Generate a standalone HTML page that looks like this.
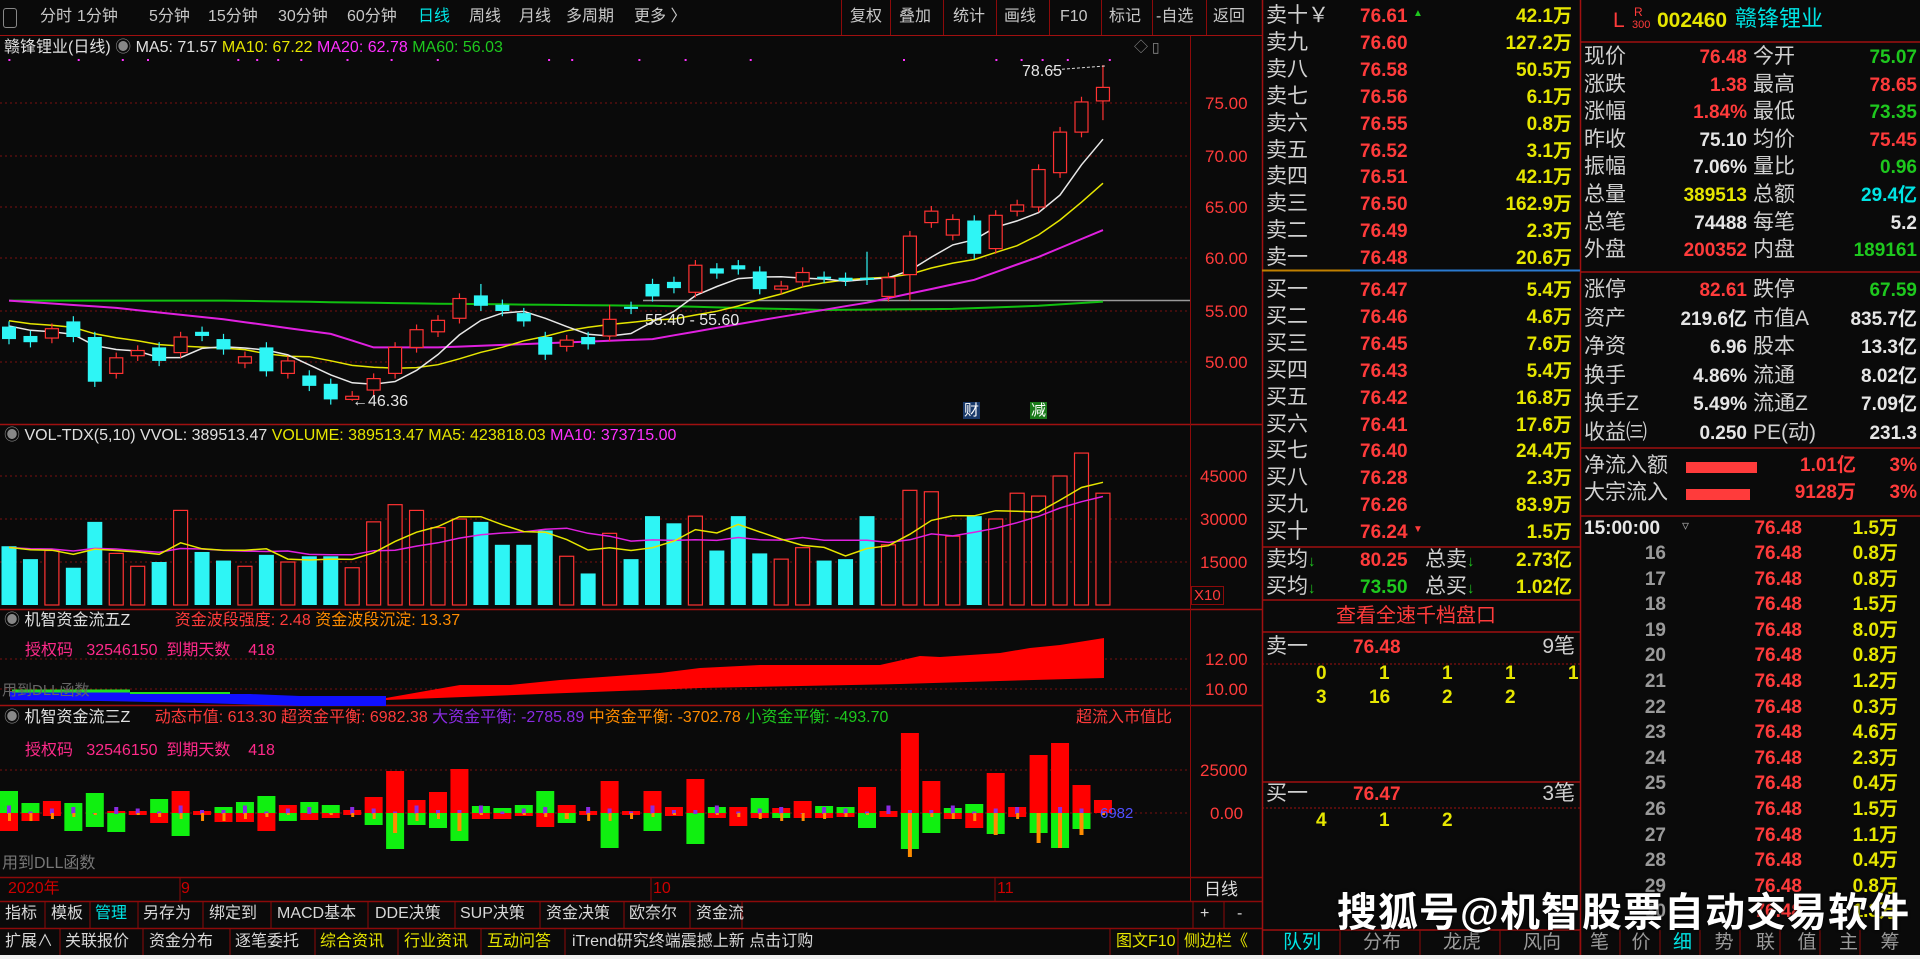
<!DOCTYPE html>
<html><head><meta charset="utf-8">
<style>
*{margin:0;padding:0;box-sizing:border-box}
body{width:1920px;height:959px;background:#0a0a0a;overflow:hidden;position:relative;font-family:"Liberation Sans","Noto Sans CJK SC",sans-serif;color:#c8c8c8}
.a{position:absolute;white-space:nowrap;line-height:1}
.hl{position:absolute;height:1px;background:#8c0a0a}
.vl{position:absolute;width:1px;background:#8c0a0a}
.tb{font-size:16px;top:9px;color:#c8c8c8}
.ob{font-size:21px;color:#d0d0d0}
.n{font-size:19px;font-weight:bold}
.bt{font-size:16px;color:#d8d8d8}
.a.r{color:#ff3b3b}.a.y{color:#e6e600}.a.g{color:#1ec81e}.a.c{color:#00e5e5}.a.w{color:#e6e6e6}.a.m{color:#ff30ff}.a.gr{color:#9a9a9a}
span.r{color:#ff3b3b}span.y{color:#e6e600}span.g{color:#1ec81e}span.m{color:#ff30ff}
</style></head><body>
<svg id="sv" width="1920" height="959" style="position:absolute;left:0;top:0"></svg>

<div class="hl" style="left:0;top:35px;width:1262px;background:#a01010"></div>
<div class="a" style="left:3px;top:8px;width:14px;height:20px;border:1px solid #888;border-radius:3px"></div>
<div class="a tb" style="left:40px">分时</div>
<div class="a tb" style="left:77px">1分钟</div>
<div class="a tb" style="left:149px">5分钟</div>
<div class="a tb" style="left:208px">15分钟</div>
<div class="a tb" style="left:278px">30分钟</div>
<div class="a tb" style="left:347px">60分钟</div>
<div class="a tb c" style="left:418px">日线</div>
<div class="a tb" style="left:469px">周线</div>
<div class="a tb" style="left:519px">月线</div>
<div class="a tb" style="left:566px">多周期</div>
<div class="a tb" style="left:634px">更多 〉</div>
<div class="vl" style="left:841px;top:0;height:35px"></div>
<div class="a tb" style="left:850px">复权</div><div class="vl" style="left:890px;top:0;height:35px"></div>
<div class="a tb" style="left:899px">叠加</div><div class="vl" style="left:943px;top:0;height:35px"></div>
<div class="a tb" style="left:953px">统计</div><div class="vl" style="left:996px;top:0;height:35px"></div>
<div class="a tb" style="left:1004px">画线</div><div class="vl" style="left:1049px;top:0;height:35px"></div>
<div class="a tb" style="left:1060px">F10</div><div class="vl" style="left:1101px;top:0;height:35px"></div>
<div class="a tb" style="left:1109px">标记</div><div class="vl" style="left:1152px;top:0;height:35px"></div>
<div class="a tb" style="left:1156px">-自选</div><div class="vl" style="left:1206px;top:0;height:35px"></div>
<div class="a tb" style="left:1213px">返回</div>

<div class="a" style="left:4px;top:40px;font-size:16px;color:#e0e0e0">赣锋锂业(日线) <span style="color:#888">◉</span> MA5: 71.57 <span class="y">MA10: 67.22</span> <span class="m">MA20: 62.78</span> <span class="g">MA60: 56.03</span></div>
<div class="a" style="left:1134px;top:40px;font-size:14px;color:#888">◇ ▯</div>
<div class="a r" style="left:1205px;top:95px;font-size:17px">75.00</div>
<div class="a r" style="left:1205px;top:148px;font-size:17px">70.00</div>
<div class="a r" style="left:1205px;top:199px;font-size:17px">65.00</div>
<div class="a r" style="left:1205px;top:250px;font-size:17px">60.00</div>
<div class="a r" style="left:1205px;top:303px;font-size:17px">55.00</div>
<div class="a r" style="left:1205px;top:354px;font-size:17px">50.00</div>
<div class="a w" style="left:1022px;top:64px;font-size:16px">78.65</div>
<div class="a w" style="left:645px;top:313px;font-size:16px">55.40 - 55.60</div>
<div class="a w" style="left:352px;top:394px;font-size:16px">←46.36</div>
<div class="a" style="left:963px;top:402px;font-size:15px;color:#fff;background:#1a3a6a;padding:1px">财</div>
<div class="a" style="left:1030px;top:402px;font-size:15px;color:#fff;background:#1a7a1a;padding:1px">减</div>

<div class="a" style="left:4px;top:428px;font-size:16px;color:#e0e0e0"><span style="color:#888">◉</span> VOL-TDX(5,10) VVOL: 389513.47 <span class="y">VOLUME: 389513.47 MA5: 423818.03</span> <span class="m">MA10: 373715.00</span></div>
<div class="a r" style="left:1200px;top:468px;font-size:17px">45000</div>
<div class="a r" style="left:1200px;top:511px;font-size:17px">30000</div>
<div class="a r" style="left:1200px;top:554px;font-size:17px">15000</div>
<div class="a r" style="left:1191px;top:586px;font-size:15px;border:1px solid #8c0a0a;padding:1px 2px">X10</div>

<div class="a" style="left:4px;top:613px;font-size:16px;color:#e0e0e0"><span style="color:#888">◉</span> 机智资金流五Z <span class="r" style="margin-left:40px">资金波段强度: 2.48</span> <span style="color:#ff8c00">资金波段沉淀: 13.37</span></div>
<div class="a" style="left:25px;top:643px;font-size:16px;color:#ff2a8a">授权码 &nbsp;&nbsp;32546150 &nbsp;到期天数 &nbsp;&nbsp;&nbsp;418</div>
<div class="a r" style="left:1205px;top:651px;font-size:17px">12.00</div>
<div class="a r" style="left:1205px;top:681px;font-size:17px">10.00</div>
<div class="a" style="left:2px;top:683px;font-size:15px;color:#666">用到DLL函数</div>

<div class="a" style="left:4px;top:710px;font-size:16px;color:#e0e0e0"><span style="color:#888">◉</span> 机智资金流三Z <span class="r" style="margin-left:20px">动态市值: 613.30</span> <span class="r">超资金平衡: 6982.38</span> <span style="color:#8a2be2">大资金平衡: -2785.89</span> <span style="color:#ff8c00">中资金平衡: -3702.78</span> <span class="g">小资金平衡: -493.70</span></div>
<div class="a r" style="left:1076px;top:710px;font-size:16px">超流入市值比</div>
<div class="a" style="left:25px;top:743px;font-size:16px;color:#ff2a8a">授权码 &nbsp;&nbsp;32546150 &nbsp;到期天数 &nbsp;&nbsp;&nbsp;418</div>
<div class="a r" style="left:1200px;top:762px;font-size:17px">25000</div>
<div class="a r" style="left:1210px;top:805px;font-size:17px">0.00</div>
<div class="a" style="left:1100px;top:806px;font-size:15px;color:#5050ff">6982</div>
<div class="a" style="left:2px;top:856px;font-size:16px;color:#777">用到DLL函数</div>

<div class="a" style="left:8px;top:881px;font-size:16px;color:#c00">2020年</div>
<div class="a" style="left:181px;top:881px;font-size:16px;color:#c00">9</div>
<div class="a" style="left:653px;top:881px;font-size:16px;color:#c00">10</div>
<div class="a" style="left:997px;top:881px;font-size:16px;color:#c00">11</div>
<div class="a" style="left:1204px;top:881px;font-size:17px;color:#ddd">日线</div>

<div class="a bt" style="left:5px;top:906px">指标</div>
<div class="a bt" style="left:51px;top:906px">模板</div>
<div class="a bt c" style="left:95px;top:906px">管理</div>
<div class="a bt" style="left:143px;top:906px">另存为</div>
<div class="a bt" style="left:209px;top:906px">绑定到</div>
<div class="a bt" style="left:277px;top:906px">MACD基本</div>
<div class="a bt" style="left:375px;top:906px">DDE决策</div>
<div class="a bt" style="left:460px;top:906px">SUP决策</div>
<div class="a bt" style="left:546px;top:906px">资金决策</div>
<div class="a bt" style="left:629px;top:906px">欧奈尔</div>
<div class="a bt" style="left:696px;top:906px">资金流</div>
<div class="a bt" style="left:1200px;top:906px">+</div>
<div class="a bt" style="left:1237px;top:906px">-</div>
<div class="a bt" style="left:5px;top:934px">扩展∧</div>
<div class="a bt" style="left:65px;top:934px">关联报价</div>
<div class="a bt" style="left:149px;top:934px">资金分布</div>
<div class="a bt" style="left:235px;top:934px">逐笔委托</div>
<div class="a bt y" style="left:320px;top:934px">综合资讯</div>
<div class="a bt y" style="left:404px;top:934px">行业资讯</div>
<div class="a bt y" style="left:487px;top:934px">互动问答</div>
<div class="a bt" style="left:572px;top:934px">iTrend研究终端震撼上新 点击订购</div>
<div class="a bt y" style="left:1116px;top:934px">图文F10</div>
<div class="a bt y" style="left:1184px;top:934px">侧边栏《</div>
<div class="a" style="left:0;top:955px;width:1920px;height:4px;background:#f0f0f0"></div>

<div id="rt"></div>

<div class="a" style="left:1337px;top:893px;font-size:40px;font-weight:bold;color:#fff;letter-spacing:1px;text-shadow:0 0 3px #000">搜狐号@机智股票自动交易软件</div>

<script>
var S=document.getElementById('sv'),h='';
function L(x1,y1,x2,y2,c,w,d){h+='<line x1="'+x1+'" y1="'+y1+'" x2="'+x2+'" y2="'+y2+'" stroke="'+c+'" stroke-width="'+(w||1)+'"'+(d?' stroke-dasharray="'+d+'"':'')+'/>';}
function R(x,y,w,hh,f,s){h+='<rect x="'+x+'" y="'+y+'" width="'+w+'" height="'+hh+'" fill="'+f+'"'+(s?' stroke="'+s+'" stroke-width="1.2"':'')+'/>';}
function P(pts,c,w){h+='<polyline points="'+pts.join(' ')+'" fill="none" stroke="'+c+'" stroke-width="'+(w||1.5)+'"/>';}
var RC='#8c0a0a';
[424,609,705,877,901,928].forEach(function(y){L(0,y+.5,1262,y+.5,y==424||y==609||y==705?'#a01010':RC,1.5);});
L(1190.5,36,1190.5,901,RC);L(1262.5,0,1262.5,955,'#a01010',1.5);L(1580.5,0,1580.5,955,'#a01010',1.5);
[103,156,207,258,311,362].forEach(function(y){L(0,y,1190,y,'#7a1010',1,'2,3');});
[476,519,562].forEach(function(y){L(0,y,1190,y,'#7a1010',1,'2,3');});
[659,689,770,813].forEach(function(y){L(0,y,1190,y,'#7a1010',1,'2,3');});
[4,37,58,70,113,122,132,143,165,186,208,261,272,304,326,357,430,474,486,496,508,528].forEach(function(x){R(x*2.1,59,2,2,'#ff30ff');});
var C=[[53.5,52.3],[52.6,52],[52.4,53.3],[54,52.5],[52.5,48.2],[49,50.5],[50.7,51.2],[51.5,50.2],[51,52.5],[53,52.6],[52.3,51.3],[50,50.6],[51.5,49.2],[49,50.2],[48.8,47.8],[48,46.5],[46.5,46.8],[47.4,48.5],[49,51.5],[51.5,53.2],[53,54.1],[54.3,56.2],[56.5,55.5],[55.6,55],[54.8,54],[52.5,50.8],[51.6,52.2],[52.5,51.8],[52.6,54.2],[55.4,55.2],[57.6,56.4],[57.8,57.2],[56.8,59.4],[59.1,58.6],[59.4,59],[58.8,57.1],[57.1,57.4],[57.8,58.7],[58.3,58.2],[58.2,57.9],[58.2,58],[56.4,58.2],[58.5,62.2],[63.5,64.6],[62.3,63.8],[63.7,60.5],[61,64.2],[64.6,65.2],[65,68.6],[68.3,72.2],[72.2,75.1],[75.2,76.5]];
function py(p){return 103+(75-p)*10.4;}
function cx(i){return 9+i*21.45;}
var CY='#2ef5f5',RD='#ff3232';
L(643,300.5,1190,300.5,'#999',1.5);
var hist=[];for(var k=0;k<40;k++)hist.push(57);for(k=0;k<20;k++)hist.push(56.5-k*0.15);
var all=hist.concat(C.map(function(c){return c[1];}));
function ma(n){var r=[];for(var i=0;i<C.length;i++){var s=0;for(var j=0;j<n;j++)s+=all[60+i-j];r.push(cx(i).toFixed(1)+','+py(s/n).toFixed(1));}return r;}
function hand(pts){var r=[];for(var i=0;i<C.length;i++){for(var j=0;j<pts.length-1;j++){if(i>=pts[j][0]&&i<=pts[j+1][0]){var t=(i-pts[j][0])/(pts[j+1][0]-pts[j][0]);r.push(cx(i).toFixed(1)+','+py(pts[j][1]+t*(pts[j+1][1]-pts[j][1])).toFixed(1));break;}}}return r;}
P(hand([[0,56],[10,56],[20,55.7],[30,55.5],[38,55.1],[44,55.2],[48,55.5],[51,55.9]]),'#10c010',2);
P(hand([[0,56],[5,55.3],[10,54.2],[15,52.8],[17,51.5],[20,51.5],[25,51.9],[30,52.3],[35,54.1],[40,55.8],[45,58],[48,60.2],[51,62.78]]),'#e020e0',2);
P(ma(10),'#e6e600',1.5);P(ma(5),'#e8e8e8',1.5);
C.forEach(function(c,i){var o=c[0],cl=c[1],hi=Math.max(o,cl)+0.5,lo=Math.min(o,cl)-0.5;
 if(i==51){hi=78.65;lo=73.35;} if(i==16)lo=46.36; if(i==40)hi=60.7; if(i==28)hi=55.6;if(i==22)hi=57.6;if(i==42)lo=56.0;
 var col=cl>=o?RD:CY,x=cx(i);L(x,py(hi),x,py(lo),col,1.2);
 var t=py(Math.max(o,cl)),b=py(Math.min(o,cl));if(b-t<2)b=t+2;
 if(cl>=o)R(x-6.5,t,13,b-t,'#0a0a0a',RD);else R(x-7,t,14,b-t,CY);});
L(1052,70,1105,66,'#ddd',1,'3,2');
var V=[20.5,16,19,13,29,18,13.5,15,33,18.5,15.5,13.5,17.5,15,17,17,13,29,35,33,27,30,29,21,21,26,17,11,25,16,31,28.5,31,19,31,18,16,20,15.5,16,31,21,40,39.5,24,31,30,39,38,45,53,39];
function vy(v){return 605-v*43/15;}
V.forEach(function(v,i){var up=C[i][1]>=C[i][0],x=cx(i);if(up)R(x-7,vy(v),14,605-vy(v),'#0a0a0a',RD);else R(x-7.5,vy(v),15,605-vy(v),CY);});
var vh=[20,20,20,20,20,20,20,20,20,20].concat(V);
function vma(n){var r=[];for(var i=0;i<V.length;i++){var s=0;for(var j=0;j<n;j++)s+=vh[10+i-j];r.push(cx(i).toFixed(1)+','+vy(s/n).toFixed(1));}return r;}
P(vma(10),'#e020e0',1.5);P(vma(5),'#e6e600',1.5);
h+='<polygon points="10,692 120,692 150,694 250,694 300,696 386,696 386,706 300,706 200,703 100,701 10,700" fill="#1010ff"/>';
L(12,691,130,691,'#20e020',3);L(130,693,230,693,'#20e020',2);
h+='<polygon points="386,698 420,692 460,685 510,685 560,680 660,673 700,668 760,665 880,665 920,656 940,657 1000,653 1030,648 1060,645 1104,638 1104,678 1000,681 900,684 700,688 540,694 386,700" fill="#ff0000"/>';
var B=[[22,'g',18,'r'],[10,'g',8,'r'],[12,'r',3,'r'],[10,'g',18,'g'],[20,'g',14,'g'],[2,'r',19,'g'],[2,'r',2,'r'],[14,'g',10,'r'],[22,'r',23,'g'],[2,'r',2,'r'],[6,'g',9,'r'],[11,'g',9,'r'],[17,'g',18,'r'],[8,'r',8,'g'],[11,'g',7,'r'],[8,'g',5,'r'],[3,'r',2,'r'],[16,'r',12,'g'],[42,'r',36,'g'],[13,'r',12,'g'],[21,'r',15,'g'],[44,'r',28,'g'],[7,'g',6,'r'],[5,'g',6,'r'],[8,'g',3,'r'],[22,'g',14,'r'],[8,'r',10,'g'],[2,'r',2,'r'],[32,'r',35,'g'],[2,'r',2,'r'],[22,'r',18,'g'],[6,'r',3,'r'],[34,'r',31,'g'],[6,'g',5,'r'],[6,'r',13,'r'],[15,'g',5,'r'],[5,'r',5,'g'],[12,'r',5,'r'],[7,'g',5,'r'],[6,'g',4,'r'],[26,'r',15,'g'],[2,'r',4,'r'],[80,'r',36,'g'],[32,'r',20,'g'],[5,'g',6,'r'],[9,'g',15,'r'],[40,'r',21,'g'],[6,'r',4,'r'],[58,'r',20,'g'],[70,'r',35,'g'],[28,'r',16,'g'],[13,'r',0,'r']];
var col={g:'#10f010',r:'#ff0000'};
B.forEach(function(b,i){var x=cx(i);R(x-9,813-b[0],18,b[0],col[b[1]]);if(b[2])R(x-9,813,18,b[2],col[b[3]]);
 var pu=((i*37)%11)-5;R(x-2,pu<0?813+pu*1.5:813-pu*1.5,4,Math.abs(pu*1.5)+1,'#8a2be2');
 var or=((i*53)%9)-4;R(x-1,813,3,Math.abs(or)*2,'#ff8c00');});
[[42,44],[46,22],[48,30],[49,35],[50,22],[18,20],[21,18],[26,6]].forEach(function(a){R(cx(a[0])-2,813,4,a[1],'#ff8c00');});
[180,651,995].forEach(function(x){L(x,877,x,901,RC);});
[45,90,138,203,271,368,455,540,624,690,742].forEach(function(x){L(x,901,x,928,RC);});
[1193,1224].forEach(function(x){L(x,901,x,928,RC);});
[60,143,230,315,398,481,565,1110,1178].forEach(function(x){L(x,928,x,955,RC);});
L(1262,270.5,1350,270.5,'#c08000',2);L(1350,270.5,1580,270.5,'#2a7ad0',2);
L(1580,42,1920,42,'#a01010',1.5);L(1580,272,1920,272,'#a01010',1.5);L(1580,448,1920,448,'#a01010',1.5);L(1580,516,1920,516,'#a01010',1.5);
[547,600,632,782,930].forEach(function(y){L(1262,y,1580,y,'#a01010',1.5);});
L(1262,664,1580,664,'#a01010',1,'2,2');L(1262,808,1580,808,'#a01010',1,'2,2');
[1340,1420,1500,1580,1620,1660,1700,1740,1780,1820,1860].forEach(function(x,i){L(x,930,x,955,RC);});
R(1686,462,71,11,'#ff3b3b');R(1686,489,64,11,'#ff3b3b');
S.innerHTML=h;

var t='';
function T(x,y,s,cls,al,fs){t+='<div class="a '+(cls||'')+'" style="'+(al?'right:'+(1920-x):'left:'+x)+'px;top:'+y+'px;'+(fs?'font-size:'+fs+'px':'')+'">'+s+'</div>';}
var sell=[['卖十￥','76.61','42.1'],['卖九','76.60','127.2'],['卖八','76.58','50.5'],['卖七','76.56','6.1'],['卖六','76.55','0.8'],['卖五','76.52','3.1'],['卖四','76.51','42.1'],['卖三','76.50','162.9'],['卖二','76.49','2.3'],['卖一','76.48','20.6']];
var buy=[['买一','76.47','5.4'],['买二','76.46','4.6'],['买三','76.45','7.6'],['买四','76.43','5.4'],['买五','76.42','16.8'],['买六','76.41','17.6'],['买七','76.40','24.4'],['买八','76.28','2.3'],['买九','76.26','83.9'],['买十','76.24','1.5']];
sell.forEach(function(r,i){var y=5+i*26.9;T(1266,y,r[0],'ob');T(1360,y+2,r[1],'n r');T(1572,y+2,r[2]+'万','n y',1);});
buy.forEach(function(r,i){var y=279+i*26.9;T(1266,y,r[0],'ob');T(1360,y+2,r[1],'n r');T(1572,y+2,r[2]+'万','n y',1);});
T(1413,9,'▲','g','',10);T(1413,525,'▼','r','',10);
T(1266,549,'卖均<span class="g" style="font-size:15px">↓</span>','ob');T(1360,551,'80.25','n r');T(1425,549,'总卖<span class="g" style="font-size:15px">↓</span>','ob');T(1572,551,'2.73亿','n y',1);
T(1266,576,'买均<span class="g" style="font-size:15px">↓</span>','ob');T(1360,578,'73.50','n g');T(1425,576,'总买<span class="g" style="font-size:15px">↓</span>','ob');T(1572,578,'1.02亿','n y',1);
T(1336,606,'查看全速千档盘口','r','',20);
T(1266,636,'卖一','ob');T(1353,638,'76.48','n r');T(1575,636,'9笔','ob',1);
['0','1','1','1','1'].forEach(function(s,i){T(1316+i*63,664,s,'n y');});
['3','16','2','2'].forEach(function(s,i){T(1316+i*63-(s=='16'?10:0),688,s,'n y');});
T(1266,783,'买一','ob');T(1353,785,'76.47','n r');T(1575,783,'3笔','ob',1);
['4','1','2'].forEach(function(s,i){T(1316+i*63,811,s,'n y');});
['队列','分布','龙虎','风向'].forEach(function(s,i){T(1283+i*80,933,s,i?'gr':'c','',19);});
['笔','价','细','势','联','值','主','筹'].forEach(function(s,i){T(1590+i*41.5,933,s,i==2?'c':'gr','',19);});
T(1613,10,'L','r','',21);T(1634,6,'R','r','',12);T(1632,20,'300','r','',11);T(1657,10,'002460','n y','',21);T(1735,8,'赣锋锂业','c','',22);
var q=[['现价','76.48','r','今开','75.07','g'],['涨跌','1.38','r','最高','78.65','r'],['涨幅','1.84%','r','最低','73.35','g'],['昨收','75.10','w','均价','75.45','r'],['振幅','7.06%','w','量比','0.96','g'],['总量','389513','y','总额','29.4亿','c'],['总笔','74488','w','每笔','5.2','w'],['外盘','200352','r','内盘','189161','g']];
q.forEach(function(r,i){var y=46+i*27.6;T(1584,y,r[0],'ob');T(1747,y+2,r[1],'n '+r[2],1);T(1753,y,r[3],'ob');T(1917,y+2,r[4],'n '+r[5],1);});
var q2=[['涨停','82.61','r','跌停','67.59','g'],['资产','219.6亿','w','市值A','835.7亿','w'],['净资','6.96','w','股本','13.3亿','w'],['换手','4.86%','w','流通','8.02亿','w'],['换手Z','5.49%','w','流通Z','7.09亿','w'],['收益㈢','0.250','w','PE(动)','231.3','w']];
q2.forEach(function(r,i){var y=279+i*28.5;T(1584,y,r[0],'ob');T(1747,y+2,r[1],'n '+r[2],1);T(1753,y,r[3],'ob');T(1917,y+2,r[4],'n '+r[5],1);});
T(1584,455,'净流入额','ob');T(1856,456,'1.01亿','n r',1);T(1917,456,'3%','n r',1);
T(1584,482,'大宗流入','ob');T(1856,483,'9128万','n r',1);T(1917,483,'3%','n r',1);
T(1584,519,'15:00:00','n w');T(1682,518,'▿','gr','',14);T(1802,519,'76.48','n r',1);T(1898,519,'1.5万','n y',1);
var vv=['0.8','0.8','1.5','8.0','0.8','1.2','0.3','4.6','2.3','0.4','1.5','1.1','0.4','0.8','1.3'];
vv.forEach(function(v,i){var y=544+i*25.6;T(1666,y,''+(16+i),'n gr',1);T(1802,y,'76.48','n r',1);T(1898,y,v+'万','n y',1);});
document.getElementById('rt').innerHTML=t;
</script>
</body></html>
